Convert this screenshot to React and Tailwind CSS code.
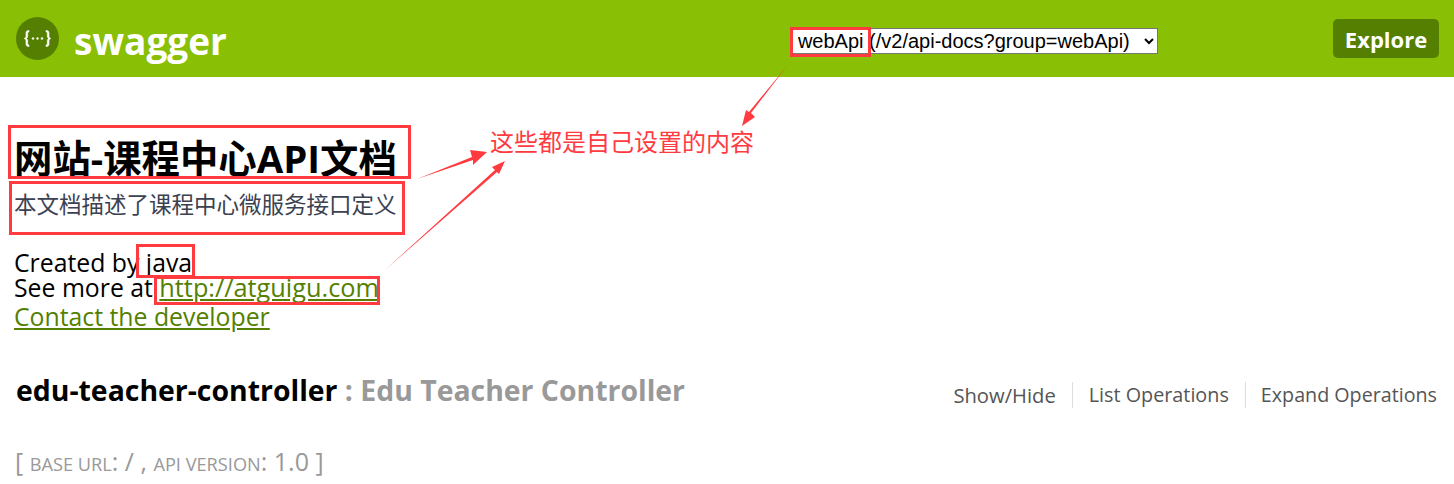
import React from 'react';

const sans = 'font-["Open_Sans","Noto_Sans_CJK_SC",sans-serif]';

// 红色标注框
const Box = ({ className }) => (
  <div className={`absolute border-[3px] border-[#ff3b3f] ${className}`} />
);

const Arrow = ({ points }) => <polygon points={points} fill="#ff3b3f" />;

const Logo = () => (
  <svg width="43" height="43" viewBox="0 0 43 43" className="shrink-0">
    <circle cx="21.5" cy="21.5" r="21.5" fill="#547f00" />
    <g fill="#fff" stroke="#fff" strokeWidth="0.6">
      <path d="M13 13.5h-.6c-1.6 0-2.4.9-2.4 2.5v3c0 1.2-.6 2-1.8 2.5 1.2.5 1.8 1.3 1.8 2.5v3c0 1.6.8 2.5 2.4 2.5h.6v-1.5c-1 0-1.3-.4-1.3-1.4v-2.8c0-1.1-.5-1.9-1.4-2.3.9-.4 1.4-1.2 1.4-2.3v-2.8c0-1 .3-1.4 1.3-1.4z" />
      <path d="M30 13.5h.6c1.6 0 2.4.9 2.4 2.5v3c0 1.2.6 2 1.8 2.5-1.2.5-1.8 1.3-1.8 2.5v3c0 1.6-.8 2.5-2.4 2.5H30v-1.5c1 0 1.3-.4 1.3-1.4v-2.8c0-1.1.5-1.9 1.4-2.3-.9-.4-1.4-1.2-1.4-2.3v-2.8c0-1-.3-1.4-1.3-1.4z" />
      <circle cx="17" cy="21.5" r="0.9" />
      <circle cx="21.5" cy="21.5" r="0.9" />
      <circle cx="26" cy="21.5" r="0.9" />
    </g>
  </svg>
);

const App = () => {
  return (
    <div className={`relative w-[1454px] h-[484px] overflow-hidden bg-white ${sans}`}>
      <header className="flex items-center h-[77px] bg-[#89bf04] pl-4 pr-[15px]">
        <Logo />
        <span className="ml-[15px] mt-[3px] text-[37px] font-bold text-white leading-none">swagger</span>
        <select className="ml-[563px] mt-[5px] w-[368px] h-[26px] pl-[3px] bg-white border border-[#767676] text-black text-[20px] font-['Liberation_Sans',sans-serif]">
          <option>webApi (/v2/api-docs?group=webApi)</option>
        </select>
        <button className="ml-auto w-[106px] h-[39px] pt-[2px] rounded-[5px] bg-[#547f00] text-white text-[22px] font-bold">
          Explore
        </button>
      </header>

      <main className="px-[14px]">
        <h1 className="mt-[57px] text-[38.4px] leading-[48px] font-bold text-black">网站-课程中心API文档</h1>
        <p className="mt-[7px] text-[22.5px] leading-[32px] text-[#3b4151]">本文档描述了课程中心微服务接口定义</p>
        <div className="mt-[29px] text-[24.8px] leading-[25px] text-black">
          <div>Created by java</div>
          <div>See more at <a href="#" className="text-[#547f00] text-[25.3px] underline">http://atguigu.com</a></div>
          <div className="mt-[4px]"><a href="#" className="text-[#547f00] underline">Contact the developer</a></div>
        </div>

        <div className="mt-[41px] flex items-center justify-between">
          <h2 className="pl-[2px] text-[28.4px] leading-[40px] font-bold text-black">
            edu-teacher-controller <span className="text-[#999]">: Edu Teacher Controller</span>
          </h2>
          <ul className="flex items-center text-[19.8px] text-[#555] mt-[10px] mr-[3px]">
            <li className="pr-4 border-r border-[#ddd] leading-[26px] text-[20.2px]">Show/Hide</li>
            <li className="px-4 border-r border-[#ddd] leading-[26px]">List Operations</li>
            <li className="pl-[15px] leading-[26px] text-[19.7px]">Expand Operations</li>
          </ul>
        </div>

        <div className="mt-[36px] pl-[1px] text-[25px] leading-[30px] text-[#999]">
          [ <span className="text-[18.2px]">BASE URL</span>: / , <span className="text-[18.2px]">API VERSION</span>: 1.0 ]
        </div>
      </main>

      {/* 截图上的手绘标注 */}
      <Box className="left-[790px] top-[27px] w-[81px] h-[30px]" />
      <Box className="left-[8px] top-[125px] w-[403px] h-[54px]" />
      <Box className="left-[9px] top-[181px] w-[396px] h-[54px]" />
      <Box className="left-[136px] top-[244px] w-[59px] h-[34px]" />
      <Box className="left-[154px] top-[276px] w-[226px] h-[29px]" />
      <svg width="1454" height="484" className="absolute inset-0 pointer-events-none">
        <Arrow points="787,66 751,113 755,117 742,126 746,110 749,112" />
        <Arrow points="417,179 472,157 470,150 487,152 473,165 473,160" />
        <Arrow points="385,270 495,170 492,167 505,161 499,174 497,172" />
      </svg>
      <div className="absolute left-[490px] top-[124px] text-[24px] leading-[36px] text-[#ff3b3f] whitespace-nowrap">
        这些都是自己设置的内容
      </div>
    </div>
  );
};

export default App;
